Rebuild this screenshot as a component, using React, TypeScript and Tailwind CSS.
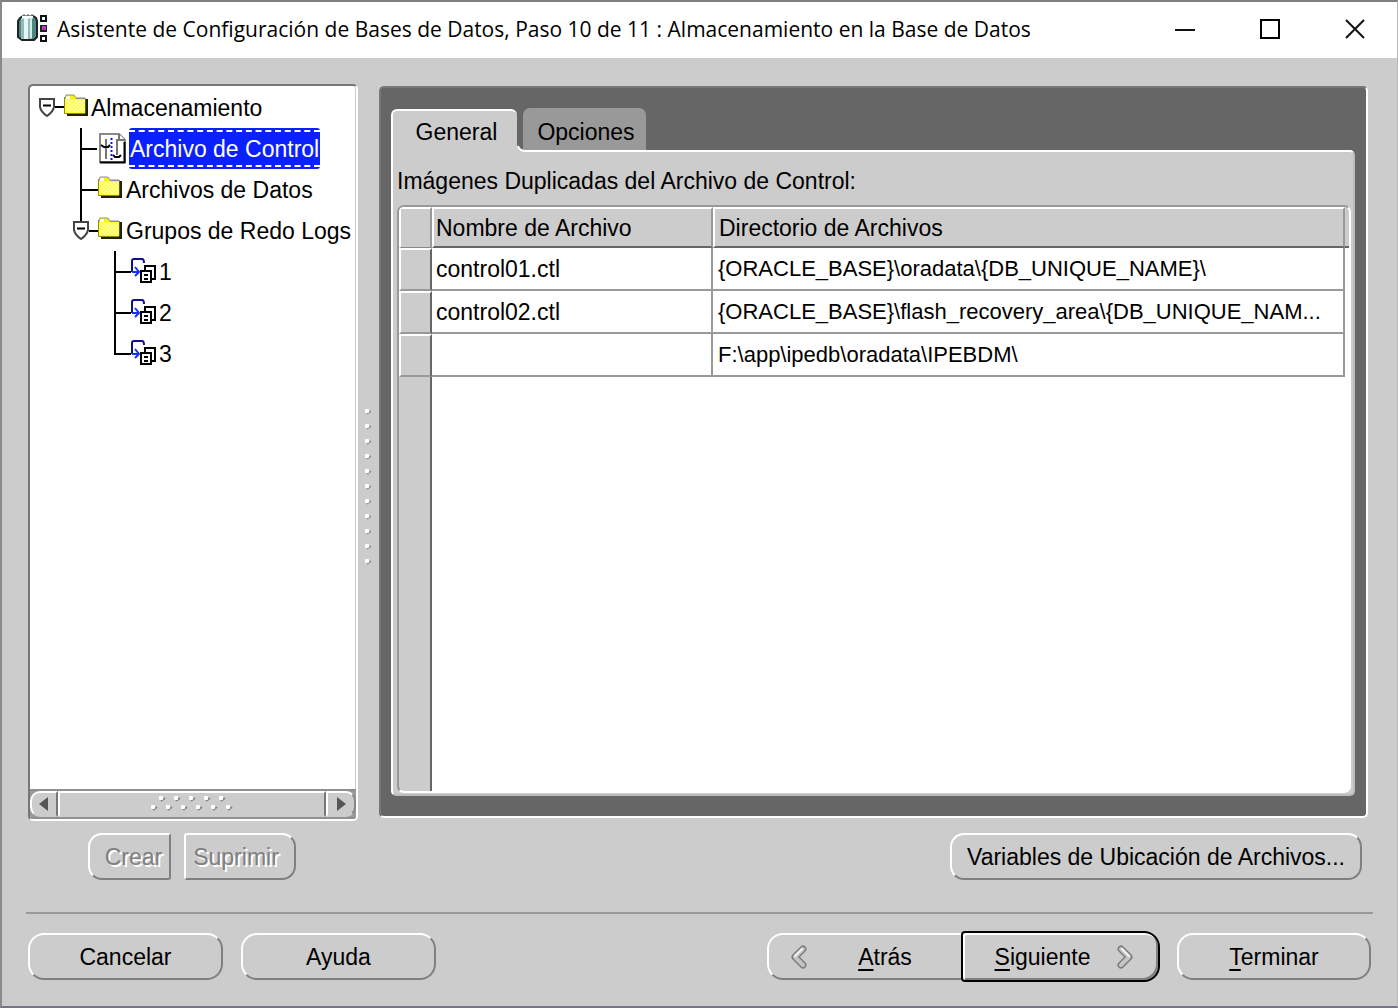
import React, { useState } from 'react';

const FOLDER_HEIGHT = 22;

function Shield({ x }: { x: number }) {
  return (
    <g>
      <path
        d={`M${x + 1} 12 H${x + 15} V20 Q${x + 14} 25 ${x + 8} 29 Q${x + 2} 25 ${x + 1} 20 Z`}
        fill="#fff"
        stroke="#444"
        strokeWidth="2"
      />
      <path d={`M${x + 4} 18.5 H${x + 12}`} stroke="#000" strokeWidth="2" />
    </g>
  );
}

function Folder({ x }: { x: number }) {
  return (
    <svg x={x} y="7" width="24" height={FOLDER_HEIGHT} viewBox="0 0 24 22">
      <path d="M3 5 H24 V22 H3 Z" fill="#222200" />
      <path d="M1 4 L2 1 H10 L12 4 H21 V19 H1 Z" fill="#f8f400" stroke="#8f8f8f" strokeWidth="1" />
      <path d="M2 3.5 L3 2 H6 V5 H2 Z" fill="#fff" />
      <rect x="1" y="5" width="20" height="14" fill="#ffff33" />
      <path d="M3 7H20M3 11H20M3 15H20" stroke="#ffffb8" strokeWidth="2" strokeDasharray="2 2" />
      <path d="M5 9H20M5 13H20M5 17H20" stroke="#ffffb8" strokeWidth="2" strokeDasharray="2 2" />
      <path d="M0.5 3V19.5H21" fill="none" stroke="#8f8a20" />
      <path d="M12 4.5H22" stroke="#8f8f8f" />
    </svg>
  );
}

function ControlFile({ x }: { x: number }) {
  return (
    <svg x={x} y="5" width="27" height="31" viewBox="0 0 27 31">
      <path d="M1 1H20L26 7V29H1Z" fill="#fff" stroke="#888" strokeWidth="2" />
      <path d="M25.5 9V29.5H1" fill="none" stroke="#000" strokeWidth="2" />
      <path d="M20 1V7H26" fill="#fff" stroke="#777" strokeWidth="2" />
      <path d="M7 6V26M18 6V22" stroke="#777" strokeWidth="2" />
      <path d="M2 12L5 14H9L11 12M14 22L16 24H20L22 22" fill="none" stroke="#000" strokeWidth="2" />
      <path d="M12.5 5V27" stroke="#1010ff" strokeWidth="2" strokeDasharray="2 2" />
    </svg>
  );
}

function RedoGroup({ x }: { x: number }) {
  return (
    <svg x={x} y="7" width="26" height="26" viewBox="0 0 26 26">
      <path d="M1 14V3Q1 1 3 1H11Q13 1 13 5" fill="none" stroke="#10108c" strokeWidth="2" />
      <rect x="14" y="8" width="10" height="13" fill="#fff" stroke="#000" strokeWidth="2" />
      <rect x="10" y="13" width="10" height="11" fill="#fff" stroke="#000" strokeWidth="2" />
      <path d="M13 17H17M13 21H17" stroke="#000" strokeWidth="2" />
      <path d="M1 14H8M4 9L8 14L4 18" fill="none" stroke="#1530ff" strokeWidth="2" />
    </svg>
  );
}

function Rails({ d }: { d: string }) {
  return <path d={d} fill="none" stroke="#000" strokeWidth="2" />;
}

type Node = { label: string; width: string; art: React.ReactNode };

const nodes: Node[] = [
  {
    label: 'Almacenamiento',
    width: 'w-[61px]',
    art: (
      <>
        <Rails d="M25 20H34" />
        <Shield x={9} />
        <Folder x={34} />
      </>
    ),
  },
  {
    label: 'Archivo de Control',
    width: 'w-[99px]',
    art: (
      <>
        <Rails d="M51 0V41M51 21H67" />
        <ControlFile x={69} />
      </>
    ),
  },
  {
    label: 'Archivos de Datos',
    width: 'w-[96px]',
    art: (
      <>
        <Rails d="M51 0V41M51 21H68" />
        <Folder x={68} />
      </>
    ),
  },
  {
    label: 'Grupos de Redo Logs',
    width: 'w-[96px]',
    art: (
      <>
        <Rails d="M51 0V12M59 21H68" />
        <Shield x={43} />
        <Folder x={68} />
      </>
    ),
  },
  {
    label: '1',
    width: 'w-[129px]',
    art: (
      <>
        <Rails d="M85 0V41M85 21H101" />
        <RedoGroup x={101} />
      </>
    ),
  },
  {
    label: '2',
    width: 'w-[129px]',
    art: (
      <>
        <Rails d="M85 0V41M85 21H101" />
        <RedoGroup x={101} />
      </>
    ),
  },
  {
    label: '3',
    width: 'w-[129px]',
    art: (
      <>
        <Rails d="M85 0V21H101" />
        <RedoGroup x={101} />
      </>
    ),
  },
];

const rows = [
  ['control01.ctl', '{ORACLE_BASE}\\oradata\\{DB_UNIQUE_NAME}\\'],
  ['control02.ctl', '{ORACLE_BASE}\\flash_recovery_area\\{DB_UNIQUE_NAM...'],
  ['', 'F:\\app\\ipedb\\oradata\\IPEBDM\\'],
];

function AppIcon() {
  return (
    <svg width="32" height="30" viewBox="0 0 32 30" aria-hidden="true">
      <path d="M4 4L7 2H17L20 4L21 7V23L18 26H6L2 23V7Z" fill="#4f8583" stroke="#222" strokeWidth="2" />
      <path d="M5 4H16V25H5Z" fill="#8fbcb9" />
      <path d="M8 4H12V25H8Z" fill="#e6f6f5" />
      <path d="M15 5V24" stroke="#d4ebea" strokeWidth="2" />
      <path d="M6 3H17" stroke="#f4ffff" strokeWidth="3" />
      <path d="M7 1H17" stroke="#555" strokeWidth="1" strokeDasharray="2 2" />
      <rect x="25" y="2" width="5" height="5" fill="#fff" stroke="#111" strokeWidth="2" />
      <rect x="24" y="11" width="7" height="7" fill="#222" />
      <rect x="26" y="12" width="4" height="4" fill="#b040b8" />
      <rect x="25" y="22" width="5" height="5" fill="#fff" stroke="#111" strokeWidth="2" />
    </svg>
  );
}

function Chevron({ right = false }: { right?: boolean }) {
  return (
    <svg
      width="18"
      height="24"
      viewBox="0 0 18 24"
      className={right ? '-scale-x-100' : ''}
      fill="none"
      strokeLinecap="round"
      strokeLinejoin="round"
      aria-hidden="true"
    >
      <path d="M13 4L5 12L13 20" stroke="#7c7c7c" strokeWidth="7" />
      <path d="M13 4L5 12L13 20" stroke="#c4c4c4" strokeWidth="4" />
      <path d="M12 4L5 11" stroke="#f4f4f4" strokeWidth="2" />
    </svg>
  );
}

const raised =
  'flex h-[47px] items-center justify-center border-2 border-t-white border-l-white border-r-[#808080] border-b-[#808080] bg-[#ccc]';

export default function App() {
  const [tab, setTab] = useState('General');
  return (
    <div className="flex min-h-screen flex-col border-t-2 border-r border-b-2 border-l-2 border-t-[#7f7f7f] border-r-[#b8b8b8] border-b-[#74748c] border-l-[#8a8a8a] bg-[#ccc] font-['Liberation_Sans',Arial,sans-serif] text-[23px] leading-7 text-black">
      <header className="flex h-14 shrink-0 items-center bg-white pb-[3px] pl-[14px]">
        <AppIcon />
        <h1 className="ml-[9px] flex-1 font-['Open_Sans','Noto_Sans',sans-serif] text-[21px] whitespace-nowrap">
          Asistente de Configuración de Bases de Datos, Paso 10 de 11 : Almacenamiento en la Base de Datos
        </h1>
        <div className="flex h-full">
          <button aria-label="Minimizar" className="flex h-full w-[85px] items-center justify-center">
            <svg width="20" height="20"><path d="M0 11H20" stroke="#111" strokeWidth="2" /></svg>
          </button>
          <button aria-label="Maximizar" className="flex h-full w-[85px] items-center justify-center">
            <svg width="20" height="20"><rect x="1" y="1" width="18" height="18" fill="none" stroke="#000" strokeWidth="2" /></svg>
          </button>
          <button aria-label="Cerrar" className="flex h-full w-[85px] items-center justify-center">
            <svg width="20" height="20"><path d="M1 1L19 19M19 1L1 19" stroke="#111" strokeWidth="2" /></svg>
          </button>
        </div>
      </header>

      <main className="flex flex-1 items-stretch pt-[26px] pr-[29px] pl-[26px]">
        <section className="flex w-[330px] shrink-0 flex-col">
          <div className="flex flex-1 flex-col overflow-hidden rounded-[5px] border-2 border-t-[#777] border-r-white border-b-white border-l-[#777] bg-white">
            <ul role="tree" className="flex-1 border-r border-[#ccc] pt-px">
              {nodes.map((n, i) => (
                <li key={n.label} role="treeitem" aria-selected={i === 1} className="flex h-[41px] items-center whitespace-nowrap">
                  <svg className={`h-[41px] shrink-0 ${n.width}`} aria-hidden="true">{n.art}</svg>
                  {i === 1 ? (
                    <span className="flex h-[41px] items-center rounded-[3px] bg-[#0a20ff] py-[2px] text-white">
                      <span className="flex h-full items-center border-y-2 border-dashed border-white px-px">{n.label}</span>
                    </span>
                  ) : (
                    <span>{n.label}</span>
                  )}
                </li>
              ))}
            </ul>
            <div className="flex h-[30px] shrink-0 border-t-2 border-b-2 border-[#909090] bg-[#999]">
              <button aria-label="Desplazar a la izquierda" className="flex w-[28px] items-center justify-center rounded-l-[10px] border-2 border-t-white border-r-[#777] border-b-[#ccc] border-l-white bg-[#ccc]">
                <svg width="10" height="14"><path d="M9 0V14L0 7Z" fill="#555" /></svg>
              </button>
              <div className="flex flex-1 items-center justify-center border-2 border-t-white border-r-[#777] border-b-[#ccc] border-l-white bg-[#ccc]">
                <svg width="84" height="18" aria-hidden="true">
                  {[0, 1, 2, 3, 4].map((k) => (
                    <g key={k}>
                      <path d={`M${11 + k * 15} 6L${15 + k * 15} 3`} stroke="#888" strokeWidth="2" />
                      <rect x={9 + k * 15} y="1" width="4" height="4" rx="1" fill="#fff" />
                    </g>
                  ))}
                  {[0, 1, 2, 3, 4, 5].map((k) => (
                    <g key={k}>
                      <path d={`M${3 + k * 15} 15L${7 + k * 15} 12`} stroke="#888" strokeWidth="2" />
                      <rect x={1 + k * 15} y="10" width="4" height="4" rx="1" fill="#fff" />
                    </g>
                  ))}
                </svg>
              </div>
              <button aria-label="Desplazar a la derecha" className="flex w-[30px] items-center justify-center rounded-r-[10px] border-2 border-t-white border-r-[#888] border-b-[#ccc] border-l-white bg-[#ccc]">
                <svg width="10" height="14"><path d="M1 0V14L10 7Z" fill="#555" /></svg>
              </button>
            </div>
          </div>
          <div className="flex gap-[13px] pt-3 pl-[60px]">
            <button disabled className={`${raised} w-[83px] rounded-l-[14px] rounded-r-[3px] pl-2 text-[#808080] [text-shadow:2px_2px_0_#fff]`}>Crear</button>
            <button disabled className={`${raised} w-[112px] rounded-l-[3px] rounded-r-[14px] pr-2 text-[#808080] [text-shadow:2px_2px_0_#fff]`}>Suprimir</button>
          </div>
        </section>

        <div className="flex w-[21px] shrink-0 justify-center pt-[324px] pr-px">
          <svg width="8" height="160" aria-hidden="true">
            {Array.from({ length: 11 }, (_, k) => (
              <g key={k}>
                <path d={`M3 ${6 + k * 15}L7 ${3 + k * 15}`} stroke="#999" strokeWidth="2" />
                <rect x="1" y={1 + k * 15} width="4" height="4" rx="1" fill="#fff" />
              </g>
            ))}
          </svg>
        </div>

        <section className="flex min-w-0 flex-1 flex-col pt-[2px]">
          <div className="mb-[3px] flex flex-1 flex-col rounded-[5px] border-2 border-t-[#777] border-r-white border-b-white border-l-[#777] bg-[#666] pt-5 pr-[11px] pb-5 pl-[10px]">
            <div role="tablist" className="flex items-end gap-[6px]">
              <button
                role="tab"
                aria-selected={tab === 'General'}
                onClick={() => setTab('General')}
                className="relative z-10 -mb-[2px] flex h-[43px] w-[126px] items-center justify-center rounded-t-[6px] border-t-2 border-l-2 border-white bg-[#ccc] pr-px pl-1"
              >
                General
                <svg width="8" height="10" className="absolute -right-[7px] bottom-0" aria-hidden="true">
                  <path d="M0 0Q1 7 7 8V10H0Z" fill="#ccc" />
                  <path d="M2 4Q3 8 8 9" fill="none" stroke="#fff" strokeWidth="2" />
                </svg>
              </button>
              <button
                role="tab"
                aria-selected={tab === 'Opciones'}
                onClick={() => setTab('Opciones')}
                className="flex h-[42px] w-[123px] items-center justify-center rounded-t-[7px] bg-[#999] pt-[6px] pl-[3px]"
              >
                Opciones
              </button>
            </div>
            <div className="flex flex-1 flex-col rounded-[5px] rounded-tl-none border-2 border-t-white border-r-[#bbb] border-b-[#bbb] border-l-white bg-[#ccc] pr-[2px] pb-px pl-1">
              <p className="flex h-[53px] items-center pt-1">Imágenes Duplicadas del Archivo de Control:</p>
              <div className="flex-1 overflow-hidden rounded-[7px] border-2 border-t-[#999] border-r-white border-b-white border-l-[#999] bg-[linear-gradient(90deg,#ccc_31px,#666_31px,#666_33px,#fff_33px)]">
                <table className="w-full table-fixed border-separate border-spacing-0">
                  <colgroup>
                    <col className="w-[33px]" />
                    <col className="w-[281px]" />
                    <col />
                    <col className="w-1" />
                  </colgroup>
                  <thead>
                    <tr className="h-[41px] bg-[#ccc] text-left">
                      <th className="border-t-2 border-r-2 border-b border-l-2 border-t-white border-r-[#999] border-b-[#888] border-l-white p-0" />
                      <th className="border-t-2 border-r-2 border-b-2 border-l-2 border-t-white border-r-[#999] border-b-[#666] border-l-white p-0 pl-[2px] font-normal">Nombre de Archivo</th>
                      <th className="border-t-2 border-r-2 border-b-2 border-l-2 border-t-white border-r-[#999] border-b-[#666] border-l-white p-0 pl-1 font-normal">Directorio de Archivos</th>
                      <th className="border-b-2 border-[#666] p-0" />
                    </tr>
                  </thead>
                  <tbody>
                    {rows.map(([name, dir], i) => (
                      <tr key={i} className="h-[43px] bg-white">
                        <td className="border-t-2 border-r-2 border-b-2 border-l-2 border-t-white border-r-[#666] border-b-[#999] border-l-white bg-[#ccc] p-0" />
                        <td className="border-r-2 border-b-2 border-[#999] p-0 pl-1">{name}</td>
                        <td className="overflow-hidden border-r-2 border-b-2 border-[#999] p-0 pl-[5px] text-[22px] whitespace-nowrap">{dir}</td>
                        <td className="p-0" />
                      </tr>
                    ))}
                  </tbody>
                </table>
              </div>
            </div>
          </div>
          <div className="flex justify-end pt-3 pr-[6px]">
            <button className={`${raised} w-[412px] rounded-[14px]`}>Variables de Ubicación de Archivos...</button>
          </div>
        </section>
      </main>

      <footer className="mx-6 mt-8 border-t-2 border-[#999]">
        <div className="flex items-center justify-between pt-[18px] pr-[2px] pb-[25px] pl-[2px]">
          <div className="flex gap-[18px]">
            <button className={`${raised} w-[195px] rounded-[16px]`}>Cancelar</button>
            <button className={`${raised} w-[195px] rounded-[16px]`}>Ayuda</button>
          </div>
          <div className="flex items-center">
            <button className={`${raised} w-[194px] gap-[50px] rounded-l-[16px] border-r-0 pr-7`}>
              <Chevron />
              <span><u className="underline-offset-4">A</u>trás</span>
            </button>
            <button className="-my-px mr-[17px] flex h-[51px] w-[199px] items-center justify-center gap-[26px] rounded-l-[4px] rounded-r-[16px] border-2 border-black bg-[#ccc] pl-2 shadow-[inset_2px_2px_0_#fff,inset_-2px_-2px_0_#808080]">
              <span><u className="underline-offset-4">S</u>iguiente</span>
              <Chevron right />
            </button>
            <button className={`${raised} w-[194px] rounded-[16px]`}>
              <span><u className="underline-offset-4">T</u>erminar</span>
            </button>
          </div>
        </div>
      </footer>
    </div>
  );
}
